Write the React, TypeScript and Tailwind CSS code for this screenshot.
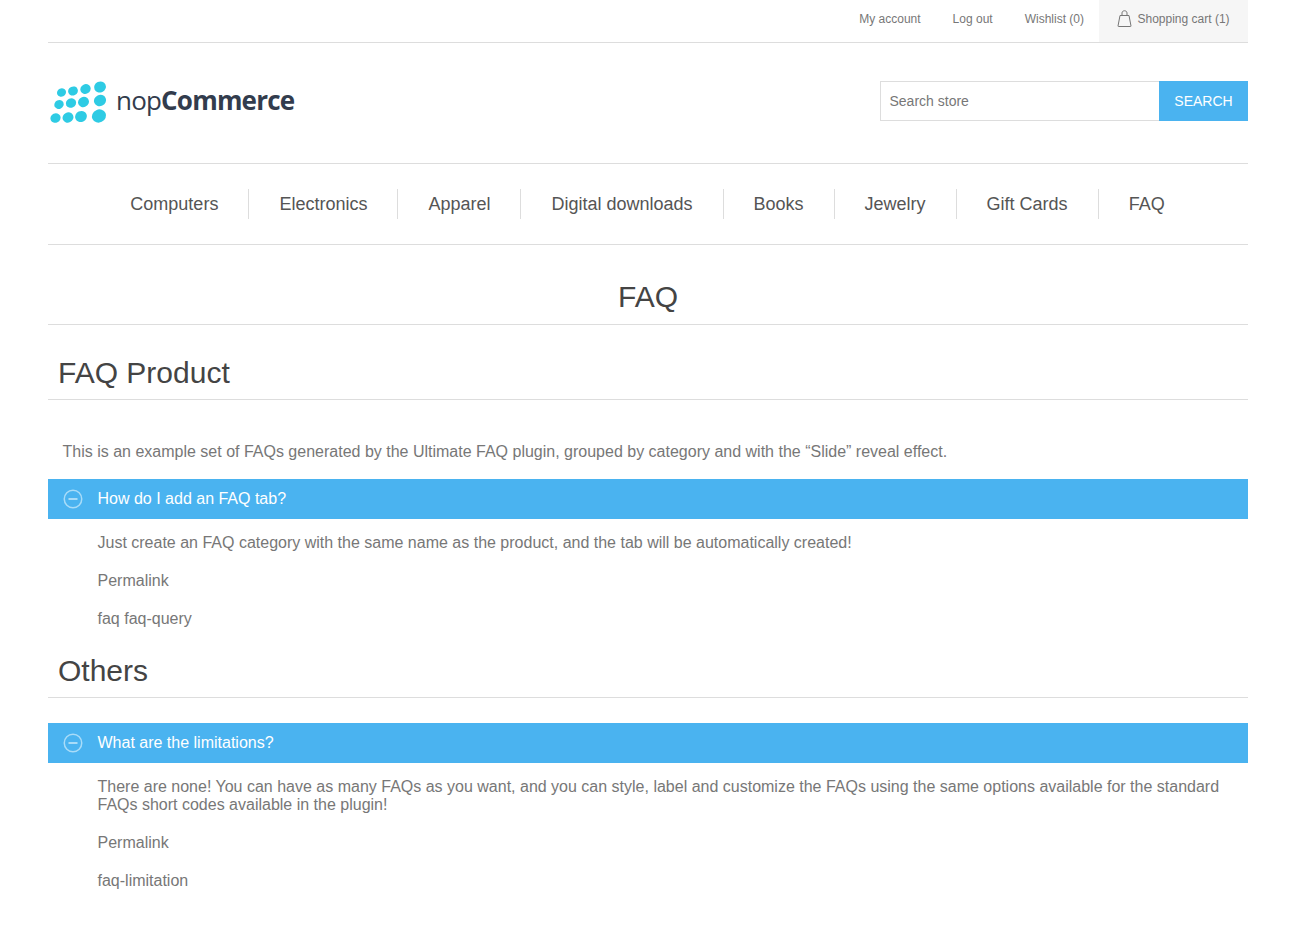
import React from 'react';

const NAV = ['Computers', 'Electronics', 'Apparel', 'Digital downloads', 'Books', 'Jewelry', 'Gift Cards', 'FAQ'];

function Logo() {
  const dots: [number, number, number][] = [
    [61.5, 92.5, 4.6], [73, 91, 5], [85.5, 89, 5.3], [100, 87, 6],
    [59, 104.5, 4.8], [71, 103, 5.2], [83.5, 102, 5.6], [100, 100.5, 6.2],
    [55.5, 118, 5.2], [68, 117.5, 5.6], [81, 116.5, 6], [99, 116, 7.2],
  ];
  return (
    <div className="flex items-center">
      <svg width="62" height="50" viewBox="48 76 62 50" className="shrink-0">
        {dots.map(([cx, cy, r], i) => (
          <ellipse key={i} cx={cx} cy={cy} rx={r} ry={r * 0.9} transform={`rotate(-25 ${cx} ${cy})`} fill="#2ecbe4" />
        ))}
      </svg>
      <span className="mb-[2px] ml-[6px] font-['Open_Sans',sans-serif] text-[26px] leading-none tracking-[-0.8px] text-[#323c4d]">
        nop<span className="font-bold">Commerce</span>
      </span>
    </div>
  );
}

function BagIcon() {
  return (
    <svg width="15" height="17" viewBox="0 0 15 17" fill="none" stroke="#777" strokeWidth="1" className="mr-[6px]">
      <path d="M3 5.5h9l2 10.5a.5.5 0 0 1-.5.5h-12a.5.5 0 0 1-.5-.5z" strokeLinejoin="round" />
      <path d="M5 5.5V3c0-3 5-3 5 0v2.5" />
    </svg>
  );
}

function FaqBar({ title }: { title: string }) {
  return (
    <div className="flex h-10 items-center bg-[#4ab3f0] pl-[15px] text-base text-white">
      <svg width="20" height="20" viewBox="0 0 20 20" fill="none" stroke="#a9dcf8" strokeWidth="1.5" className="mr-[14.5px] shrink-0">
        <circle cx="10" cy="10" r="8.75" />
        <path d="M5.5 10h9" strokeWidth="2" />
      </svg>
      {title}
    </div>
  );
}

export default function App() {
  return (
    <div className="ml-12 h-[939px] w-[1200px] overflow-hidden bg-white font-['Liberation_Sans',Arial,sans-serif] text-[#777]">
      <div className="flex h-[43px] justify-end border-b border-[#ddd] text-xs">
        <div className="flex items-center pb-[5px]">
          <span className="mr-8">My account</span>
          <span className="mr-8">Log out</span>
          <span className="mr-[15px]">Wishlist (0)</span>
        </div>
        <div className="flex h-[42px] w-[149px] items-center bg-[#f6f6f6] pb-[5px] pl-[17.5px]">
          <BagIcon />
          Shopping cart (1)
        </div>
      </div>

      <div className="flex h-[121px] items-center justify-between border-b border-[#ddd] pb-[4px]">
        <Logo />
        <div className="flex h-10 w-[368px]">
          <div className="flex flex-1 items-center border border-r-0 border-[#ddd] pl-[8.5px] text-sm">Search store</div>
          <div className="flex w-[89px] items-center justify-center bg-[#4ab3f0] text-sm text-white">SEARCH</div>
        </div>
      </div>

      <div className="flex h-[81px] items-center justify-center border-b border-[#ddd] pr-[1px] text-lg text-[#555]">
        {NAV.map((item, i) => (
          <span key={item} className={`px-[30px] leading-[30px] ${i < NAV.length - 1 ? 'border-r border-[#ddd]' : ''}`}>
            {item}
          </span>
        ))}
      </div>

      <h1 className="flex h-20 items-end justify-center border-b border-[#ddd] pb-[9px] text-[30px] leading-[36px] text-[#444]">FAQ</h1>

      <h2 className="flex h-[75px] items-end border-b border-[#ddd] pb-[8px] pl-[10px] text-[30px] leading-[36px] text-[#444]">FAQ Product</h2>

      <p className="mt-[42px] h-[37px] pl-[14.5px] text-base leading-[20px]">
        This is an example set of FAQs generated by the Ultimate FAQ plugin, grouped by category and with the “Slide” reveal effect.
      </p>

      <FaqBar title="How do I add an FAQ tab?" />
      <div className="pl-[49.5px] pt-[15px] text-base leading-[18px]">
        <p>Just create an FAQ category with the same name as the product, and the tab will be automatically created!</p>
        <p className="mt-[20px]">Permalink</p>
        <p className="mt-[20px]">faq faq-query</p>
      </div>

      <h2 className="mt-[9px] flex h-[61px] items-end border-b border-[#ddd] pb-[8px] pl-[10px] text-[30px] leading-[36px] text-[#444]">Others</h2>

      <div className="mt-[25px]">
        <FaqBar title="What are the limitations?" />
      </div>
      <div className="pl-[49.5px] pr-5 pt-[15px] text-base leading-[18px]">
        <p>There are none! You can have as many FAQs as you want, and you can style, label and customize the FAQs using the same options available for the standard FAQs short codes available in the plugin!</p>
        <p className="mt-[20px]">Permalink</p>
        <p className="mt-[20px]">faq-limitation</p>
      </div>
    </div>
  );
}
